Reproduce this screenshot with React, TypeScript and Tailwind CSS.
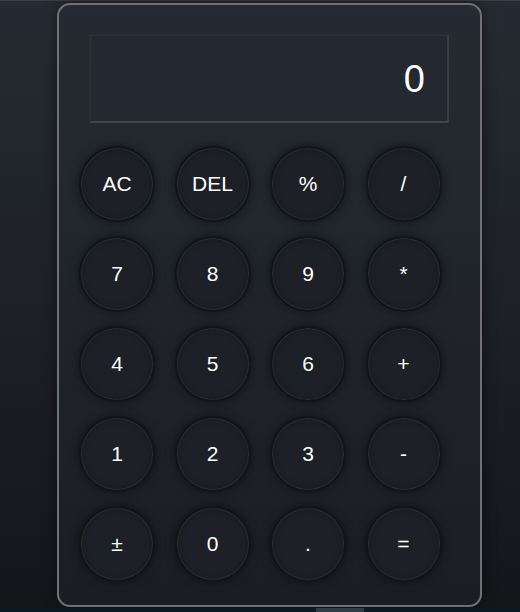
const keys = ["AC", "DEL", "%", "/", "7", "8", "9", "*", "4", "5", "6", "+", "1", "2", "3", "-", "±", "0", ".", "="]

function Key({ label }: { label: string }) {
  return (
    <button className="w-[76px] h-[76px] rounded-full border-2 border-[#131418] bg-[#1d2026] text-white text-[21px] flex items-center justify-center shadow-[0_0_10px_rgba(0,0,0,0.5),inset_0_0_0_1px_#2b2e34,inset_0_0_6px_rgba(0,0,0,0.35)]">
      {label}
    </button>
  )
}

export default function App() {
  return (
    <div className="h-[612px] w-[520px] flex flex-col overflow-hidden" style={{ fontFamily: '"Liberation Sans", Arial, sans-serif' }}>
      <div className="flex-1 bg-gradient-to-b from-[#262b33] to-[#15161a] border-t border-[#3a3f47] pt-[2px]">
        <div className="ml-[57px] w-[425px] h-[604px] rounded-[13px] border-2 border-[#717174] bg-gradient-to-b from-[#262b33] to-[#1b1d22] shadow-[0_0_14px_rgba(0,0,0,0.5)] pt-[30px] pb-6">
          <div className="mx-[31px] h-[88px] border border-[#2c3139] border-b-2 border-r-2 border-b-[#40444b] border-r-[#393d45] bg-[#232831] flex items-center justify-end pr-[22px]">
            <span className="text-white text-[38px] leading-none">0</span>
          </div>
          <div className="mt-[23px] ml-[20px] grid grid-cols-[repeat(4,76px)] gap-x-[19.5px] gap-y-[14px]">
            {keys.map((k) => (
              <Key key={k} label={k} />
            ))}
          </div>
        </div>
      </div>
      <div className="h-[4px] bg-[#0b1a23] flex">
        <div className="ml-[316px] w-[48px] bg-[#2f3e46]" />
      </div>
    </div>
  )
}
